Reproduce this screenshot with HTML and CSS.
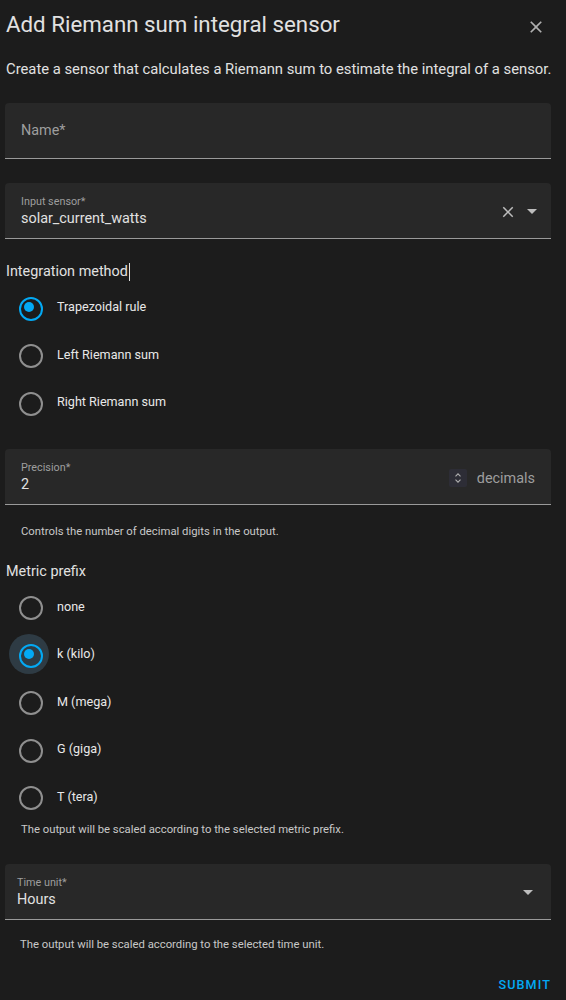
FILE: index.html
```html
<!DOCTYPE html>
<html lang="en">
<head>
<meta charset="utf-8">
<title>Add Riemann sum integral sensor</title>
<link rel="stylesheet" href="styles.css">
</head>
<body>
<div class="dialog">
  <header class="header">
    <h1 class="title">Add Riemann sum integral sensor</h1>
    <button class="close" aria-label="Close">
      <svg viewBox="0 0 24 24" width="20" height="20"><path d="M19 6.41 17.59 5 12 10.59 6.41 5 5 6.41 10.59 12 5 17.59 6.41 19 12 13.41 17.59 19 19 17.59 13.41 12z" fill="currentColor"/></svg>
    </button>
  </header>
  <p class="desc">Create a sensor that calculates a Riemann sum to estimate the integral of a sensor.</p>

  <div class="field field-empty">
    <span class="placeholder">Name*</span>
  </div>

  <div class="field">
    <div class="field-text">
      <span class="label">Input sensor*</span>
      <span class="value">solar_current_watts</span>
    </div>
    <div class="field-icons">
      <svg class="clear" viewBox="0 0 24 24" width="18" height="18"><path d="M19 6.41 17.59 5 12 10.59 6.41 5 5 6.41 10.59 12 5 17.59 6.41 19 12 13.41 17.59 19 19 17.59 13.41 12z" fill="currentColor"/></svg>
      <svg class="arrow" viewBox="0 0 10 5" width="10" height="5"><path d="M0 0h10L5 5z" fill="currentColor"/></svg>
    </div>
  </div>

  <h2 class="section">Integration method<span class="caret"></span></h2>
  <div class="radios">
    <label class="radio"><span class="ring checked"><span class="dot"></span></span><span class="rlabel">Trapezoidal rule</span></label>
    <label class="radio"><span class="ring"></span><span class="rlabel">Left Riemann sum</span></label>
    <label class="radio"><span class="ring"></span><span class="rlabel">Right Riemann sum</span></label>
  </div>

  <div class="field field-precision">
    <div class="field-text">
      <span class="label">Precision*</span>
      <span class="value">2</span>
    </div>
    <div class="field-icons">
      <span class="spinner">
        <svg viewBox="0 0 12 16" width="10" height="14"><path d="M3 6l3-3 3 3M3 10l3 3 3-3" stroke="currentColor" stroke-width="1.3" fill="none"/></svg>
      </span>
      <span class="suffix">decimals</span>
    </div>
  </div>
  <p class="helper">Controls the number of decimal digits in the output.</p>

  <h2 class="section section-metric">Metric prefix</h2>
  <div class="radios">
    <label class="radio"><span class="ring"></span><span class="rlabel">none</span></label>
    <label class="radio"><span class="ring checked focused"><span class="dot"></span></span><span class="rlabel">k (kilo)</span></label>
    <label class="radio"><span class="ring"></span><span class="rlabel">M (mega)</span></label>
    <label class="radio"><span class="ring"></span><span class="rlabel">G (giga)</span></label>
    <label class="radio"><span class="ring"></span><span class="rlabel">T (tera)</span></label>
  </div>
  <p class="helper helper-tight">The output will be scaled according to the selected metric prefix.</p>

  <div class="field field-time">
    <div class="field-text">
      <span class="label">Time unit*</span>
      <span class="value">Hours</span>
    </div>
    <div class="field-icons">
      <svg class="arrow" viewBox="0 0 10 5" width="10" height="5"><path d="M0 0h10L5 5z" fill="currentColor"/></svg>
    </div>
  </div>
  <p class="helper helper-time">The output will be scaled according to the selected time unit.</p>

  <div class="actions">
    <button class="submit">Submit</button>
  </div>
</div>
</body>
</html>
```
FILE: styles.css
```css
* { box-sizing: border-box; }
html, body {
  margin: 0;
  padding: 0;
  background: #1c1c1c;
  height: 100%;
}
body {
  font-family: Roboto, "Noto Sans", sans-serif;
  color: #e1e1e1;
}
.dialog {
  padding: 0 15px 0 5px;
  display: flex;
  flex-direction: column;
}
.header {
  height: 48px;
  display: flex;
  align-items: center;
  justify-content: space-between;
}
.title {
  margin: 0 0 0 1px;
  font-size: 22.3px;
  font-weight: 400;
  color: #e1e1e1;
  line-height: 28px;
}
.close {
  background: none;
  border: 0;
  padding: 0;
  color: #b0b0b0;
  width: 20px;
  height: 20px;
  margin-right: 5px;
  margin-top: 5px;
}
.close svg { display: block; }
.desc {
  margin: 11px 0 0 1px;
  font-size: 14.8px;
  line-height: 20px;
  color: #e1e1e1;
  white-space: nowrap;
}
.field {
  margin-top: 24px;
  height: 56px;
  background: #282828;
  border-radius: 4px 4px 0 0;
  border-bottom: 1px solid #9a9a9a;
  display: flex;
  align-items: stretch;
  justify-content: space-between;
  padding: 0 16px;
}
.field-empty { align-items: center; }
.placeholder {
  font-size: 14.4px;
  color: #9e9e9e;
}
.field-text {
  display: flex;
  flex-direction: column;
  padding-top: 11px;
}
.label {
  font-size: 10.8px;
  line-height: 16px;
  color: #9e9e9e;
}
.value {
  font-size: 14.4px;
  line-height: 18px;
  color: #e1e1e1;
}
.field-icons {
  display: flex;
  align-items: center;
  gap: 8px;
  padding-top: 4px;
}
.clear { color: #bdbdbd; display: block; margin-top: -2px; margin-right: 2px; }
.arrow { color: #bdbdbd; display: block; margin-top: -3px; margin-right: -2px; }
.section {
  margin: 22px 0 0 1px;
  font-size: 14.4px;
  font-weight: 400;
  line-height: 22px;
  color: #e1e1e1;
  display: flex;
  align-items: center;
}
.caret {
  display: inline-block;
  width: 1px;
  height: 18px;
  background: #e1e1e1;
  margin-left: 1px;
}
.section-metric { margin-top: 21px; }
.radios {
  display: flex;
  flex-direction: column;
}
.radio {
  height: 47.5px;
  display: flex;
  align-items: center;
  padding-left: 4px;
}
.ring {
  width: 40px;
  height: 40px;
  border-radius: 50%;
  position: relative;
  margin-right: 8px;
  flex: none;
}
.ring::before {
  content: "";
  position: absolute;
  left: 10px;
  top: 10px;
  width: 20px;
  height: 20px;
  border-radius: 50%;
  border: 2px solid #8f8f8f;
}
.ring.checked::before { border-color: #03a9f4; }
.ring.focused { background: #2e3b44; }
.dot {
  position: absolute;
  left: 15px;
  top: 15px;
  width: 10px;
  height: 10px;
  border-radius: 50%;
  background: #03a9f4;
}
.rlabel {
  font-size: 12.6px;
  color: #e8e8e8;
}
.field-precision { margin-top: 23px; }
.spinner {
  width: 18px;
  height: 18px;
  background: #2d2d36;
  border-radius: 2px;
  color: #b0b0b0;
  display: flex;
  align-items: center;
  justify-content: center;
  margin-right: 2px;
}
.suffix {
  font-size: 14.4px;
  color: #9e9e9e;
}
.helper {
  margin: 19px 0 0 16px;
  font-size: 11.3px;
  line-height: 16px;
  color: #c8c8c8;
}
.helper-tight { margin-top: 2px; }
.field-time { margin-top: 26px; padding-left: 12px; padding-right: 20px; }
.helper-time { margin-top: 17px; margin-left: 15px; }
.actions {
  display: flex;
  justify-content: flex-end;
  margin-top: 24px;
}
.submit {
  background: none;
  border: 0;
  padding: 0;
  font-family: Roboto, sans-serif;
  font-size: 12.6px;
  font-weight: 500;
  letter-spacing: 1.1px;
  text-transform: uppercase;
  color: #03a9f4;
  line-height: 16px;
}
```
